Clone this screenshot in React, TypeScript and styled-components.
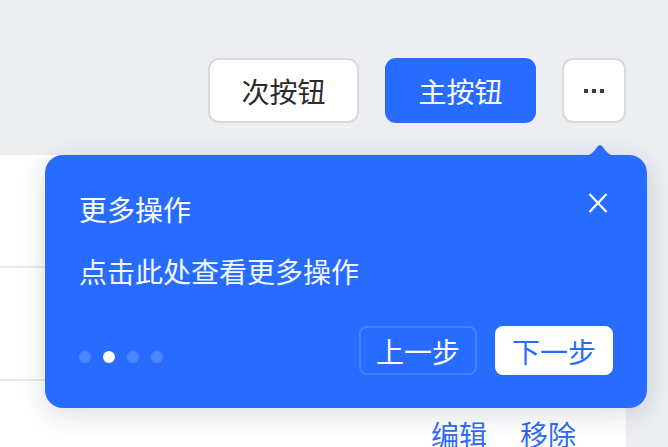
import React from "react";
import styled, { createGlobalStyle } from "styled-components";

const GlobalStyle = createGlobalStyle`
  html, body {
    margin: 0;
    padding: 0;
    background: #eceef2;
    font-family: "Noto Sans CJK SC", "Noto Sans", "Liberation Sans", sans-serif;
  }
`;

const Page = styled.div`
  position: relative;
  width: 668px;
  height: 447px;
  overflow: hidden;
  background: #eceef2;
`;

const Toolbar = styled.div`
  display: flex;
  justify-content: flex-end;
  align-items: center;
  gap: 26px;
  padding: 58px 42px 0 0;
`;

const ActionButton = styled.button<{ $primary?: boolean }>`
  box-sizing: border-box;
  width: 151px;
  height: 65px;
  border-radius: 11px;
  border: ${(p) => (p.$primary ? "none" : "2px solid #d8d9dc")};
  background: ${(p) => (p.$primary ? "#276cff" : "#ffffff")};
  color: ${(p) => (p.$primary ? "#ffffff" : "#2b2b2b")};
  font-family: inherit;
  font-size: 28px;
  line-height: 40px;
  padding: 0;
`;

const MoreButton = styled.button`
  box-sizing: border-box;
  width: 64px;
  height: 65px;
  border-radius: 11px;
  border: 2px solid #d8d9dc;
  background: #ffffff;
  display: flex;
  align-items: center;
  justify-content: center;
  gap: 4px;
  padding: 0;
`;

const MoreDot = styled.span`
  width: 4px;
  height: 4px;
  background: #3c3c3c;
`;

const Card = styled.div`
  margin: 32px 42px 0 0;
  background: #ffffff;
`;

const Row = styled.div`
  height: 111px;
  border-bottom: 2px solid #e9e9ec;
`;

const ActionRow = styled.div`
  display: flex;
  justify-content: flex-end;
  gap: 33px;
  padding: 33px 50px 0 0;
  height: 100px;
`;

const LinkAction = styled.a`
  color: #2f6df2;
  font-size: 28px;
  line-height: 40px;
  text-decoration: none;
`;

const Popover = styled.div`
  position: absolute;
  left: 45px;
  top: 155px;
  width: 602px;
  height: 253px;
  box-sizing: border-box;
  padding: 34px 34px 33px 34px;
  background: #276cff;
  border-radius: 18px;
  box-shadow: 0 6px 28px rgba(20, 30, 60, 0.16);
  color: #ffffff;
  display: flex;
  flex-direction: column;
`;

const Arrow = styled.svg`
  position: absolute;
  top: -14px;
  left: 537px;
  width: 36px;
  height: 15px;
`;

const Header = styled.div`
  display: flex;
  justify-content: space-between;
  align-items: flex-start;
`;

const Title = styled.div`
  font-size: 28px;
  line-height: 40px;
  font-weight: 400;
`;

const CloseButton = styled.button`
  width: 20px;
  height: 20px;
  margin: 4px 5px 0 0;
  padding: 0;
  border: none;
  background: transparent;
  display: flex;
`;

const Description = styled.div`
  margin-top: 22px;
  font-size: 28px;
  line-height: 40px;
  color: #f2f6ff;
`;

const Footer = styled.div`
  margin-top: 35px;
  display: flex;
  align-items: center;
  justify-content: space-between;
`;

const Dots = styled.div`
  display: flex;
  gap: 12px;
  margin: 13px 0 0 0;
`;

const Dot = styled.span<{ $active?: boolean }>`
  width: 12px;
  height: 12px;
  border-radius: 50%;
  background: ${(p) => (p.$active ? "#ffffff" : "rgba(255, 255, 255, 0.18)")};
`;

const StepButtons = styled.div`
  display: flex;
  gap: 18px;
`;

const StepButton = styled.button<{ $solid?: boolean }>`
  box-sizing: border-box;
  width: 118px;
  height: 49px;
  border-radius: 8px;
  border: 2px solid ${(p) => (p.$solid ? "#ffffff" : "rgba(255, 255, 255, 0.14)")};
  background: ${(p) => (p.$solid ? "#ffffff" : "transparent")};
  color: ${(p) => (p.$solid ? "#276cff" : "#ffffff")};
  font-family: inherit;
  font-size: 28px;
  line-height: 40px;
  padding: 0;
`;

const steps = [0, 1, 2, 3];

export default function App() {
  const current = 1;
  return (
    <Page>
      <GlobalStyle />
      <Toolbar>
        <ActionButton>次按钮</ActionButton>
        <ActionButton $primary>主按钮</ActionButton>
        <MoreButton>
          <MoreDot />
          <MoreDot />
          <MoreDot />
        </MoreButton>
      </Toolbar>

      <Card>
        <Row />
        <Row />
        <ActionRow>
          <LinkAction>编辑</LinkAction>
          <LinkAction>移除</LinkAction>
        </ActionRow>
      </Card>

      <Popover>
        <Arrow viewBox="0 0 36 15">
          <path
            d="M0 15 C7 15 9.5 13 12.5 9.5 L15.6 5.6 Q18 2.6 20.4 5.6 L23.5 9.5 C26.5 13 29 15 36 15 Z"
            fill="#276cff"
          />
        </Arrow>
        <Header>
          <Title>更多操作</Title>
          <CloseButton aria-label="关闭">
            <svg width="20" height="20" viewBox="0 0 20 20">
              <path d="M1.5 1 L18.5 19 M18.5 1 L1.5 19" stroke="#ffffff" strokeWidth="2.2" fill="none" />
            </svg>
          </CloseButton>
        </Header>
        <Description>点击此处查看更多操作</Description>
        <Footer>
          <Dots>
            {steps.map((s) => (
              <Dot key={s} $active={s === current} />
            ))}
          </Dots>
          <StepButtons>
            <StepButton>上一步</StepButton>
            <StepButton $solid>下一步</StepButton>
          </StepButtons>
        </Footer>
      </Popover>
    </Page>
  );
}
